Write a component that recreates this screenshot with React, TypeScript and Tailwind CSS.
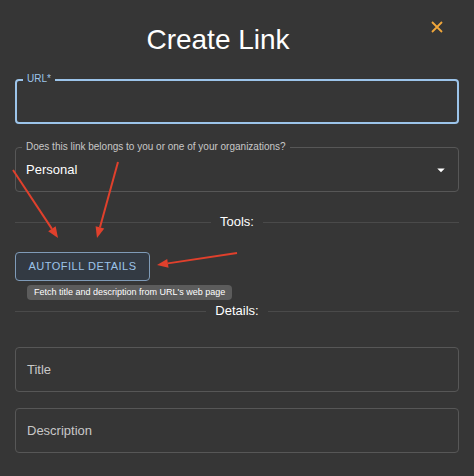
import React from "react";

function Divider({ label }: { label: string }) {
  return (
    <div className="flex h-[16px] items-center">
      <div className="h-px flex-1 bg-[#4a4a4a]" />
      <span className="px-[9px] text-[13px] leading-[16px] text-white">{label}</span>
      <div className="h-px flex-1 bg-[#4a4a4a]" />
    </div>
  );
}

function Arrow({ x1, y1, x2, y2 }: { x1: number; y1: number; x2: number; y2: number }) {
  const a = Math.atan2(y2 - y1, x2 - x1);
  const len = 11;
  const w = 4.5;
  const bx = x2 - len * Math.cos(a);
  const by = y2 - len * Math.sin(a);
  const px = -Math.sin(a) * w;
  const py = Math.cos(a) * w;
  return (
    <g>
      <line x1={x1} y1={y1} x2={bx} y2={by} stroke="#e0402c" strokeWidth={2} />
      <polygon points={`${x2},${y2} ${bx + px},${by + py} ${bx - px},${by - py}`} fill="#e0402c" />
    </g>
  );
}

export default function App() {
  return (
    <div
      className="relative h-[476px] w-[474px] overflow-hidden bg-[#363636] px-[15px] pt-[22px]"
      style={{ fontFamily: '"Liberation Sans", Arial, sans-serif' }}
    >
      <div className="relative flex justify-center pr-[38px]">
        <h1 className="text-[28px] leading-[36px] text-white">Create Link</h1>
        <button className="absolute right-[13px] top-[-4px] flex h-[18px] w-[18px] items-center justify-center">
          <svg width="12" height="12" viewBox="0 0 12 12">
            <path d="M1 1 L11 11 M11 1 L1 11" stroke="#f0a63a" strokeWidth="1.8" />
          </svg>
        </button>
      </div>

      {/* URL */}
      <div className="relative mt-[21px] h-[45px] rounded-[4px] border-2 border-[#9cc4ea]">
        <span className="absolute left-[6px] top-[-8px] bg-[#363636] px-[4px] text-[10px] leading-[12px] text-[#9cc4ea]">
          URL*
        </span>
      </div>

      {/* Select */}
      <div className="relative mt-[23px] flex h-[45px] items-center rounded-[4px] border border-[#575757] pl-[10px] pr-[8px]">
        <span className="absolute left-[6px] top-[-7px] bg-[#363636] px-[4px] text-[10px] leading-[12px] text-[#c8c8c8]">
          Does this link belongs to you or one of your organizations?
        </span>
        <span className="flex-1 text-[13px] text-white">Personal</span>
        <svg width="18" height="18" viewBox="0 0 24 24">
          <path d="M7 10l5 5 5-5z" fill="#ffffff" />
        </svg>
      </div>

      <div className="mt-[22px]">
        <Divider label="Tools:" />
      </div>

      <div className="relative mt-[22px] flex">
        <button className="flex h-[29px] w-[135px] items-center justify-center rounded-[4px] border border-[#7f9bb8] bg-[#333a43] text-[11px] tracking-[0.5px] text-[#9cc4ea]">
          AUTOFILL DETAILS
        </button>
        <div className="absolute left-[12px] top-[33px] rounded-[4px] bg-[#5c5c5c] px-[7px] py-[2px] text-[9px] leading-[11px] text-white">
          Fetch title and description from URL&apos;s web page
        </div>
      </div>

      <div className="mt-[22px]">
        <Divider label="Details:" />
      </div>

      <div className="mt-[28px] flex h-[45px] items-center rounded-[4px] border border-[#575757] px-[11px] text-[13px] text-[#c8c8c8]">
        Title
      </div>
      <div className="mt-[16px] flex h-[45px] items-center rounded-[4px] border border-[#575757] px-[11px] text-[13px] text-[#c8c8c8]">
        Description
      </div>

      <svg className="pointer-events-none absolute inset-0" width="474" height="476">
        <Arrow x1={13} y1={170} x2={58} y2={238} />
        <Arrow x1={118} y1={162} x2={97} y2={238} />
        <Arrow x1={237} y1={253} x2={157} y2={265} />
      </svg>
    </div>
  );
}
